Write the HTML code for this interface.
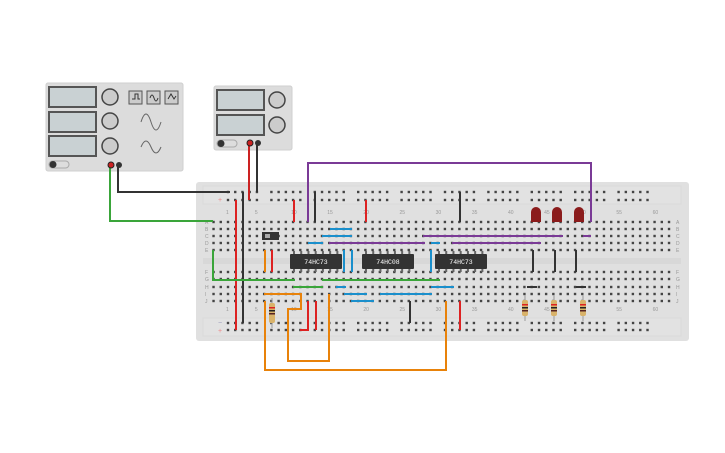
<!DOCTYPE html>
<html><head><meta charset="utf-8"><style>
body{margin:0;background:#fff;width:725px;height:453px;overflow:hidden;font-family:"Liberation Sans",sans-serif}
svg{position:absolute;left:0;top:0}
</style></head><body>
<svg id="s" width="725" height="453" viewBox="0 0 725 453" xmlns="http://www.w3.org/2000/svg">
<rect x="46" y="83" width="137" height="88" rx="2" fill="#dcdcdc" stroke="#cfcfcf"/>
<rect x="49" y="87" width="47" height="20" fill="#c9d1d3" stroke="#555" stroke-width="2"/>
<rect x="49" y="112" width="47" height="20" fill="#c9d1d3" stroke="#555" stroke-width="2"/>
<rect x="49" y="136" width="47" height="20" fill="#c9d1d3" stroke="#555" stroke-width="2"/>
<circle cx="110" cy="97" r="8" fill="#ccc" stroke="#444" stroke-width="1.5"/>
<circle cx="110" cy="121" r="8" fill="#ccc" stroke="#444" stroke-width="1.5"/>
<circle cx="110" cy="146" r="8" fill="#ccc" stroke="#444" stroke-width="1.5"/>
<rect x="129" y="91" width="13" height="13" fill="#ccc" stroke="#555"/>
<rect x="147" y="91" width="13" height="13" fill="#ccc" stroke="#555"/>
<rect x="165" y="91" width="13" height="13" fill="#ccc" stroke="#555"/>
<path d="M132 99h3v-5h3v5h2M150 98q2-6 4 0t4 0M168 99l3-5 3 5 2-3" fill="none" stroke="#333"/>
<path d="M141 122q5-16 10 0t10 0M141 147q5-12 10 0t10 0" fill="none" stroke="#666"/>
<rect x="49" y="161" width="20" height="7" rx="3.5" fill="#ddd" stroke="#aaa"/><circle cx="53" cy="164.5" r="3.5" fill="#333"/>
<rect x="214" y="86" width="78" height="64" rx="2" fill="#dcdcdc" stroke="#cfcfcf"/>
<rect x="217" y="90" width="47" height="20" fill="#c9d1d3" stroke="#555" stroke-width="2"/>
<rect x="217" y="115" width="47" height="20" fill="#c9d1d3" stroke="#555" stroke-width="2"/>
<circle cx="277" cy="100" r="8" fill="#ccc" stroke="#444" stroke-width="1.5"/>
<circle cx="277" cy="125" r="8" fill="#ccc" stroke="#444" stroke-width="1.5"/>
<rect x="217" y="140" width="20" height="7" rx="3.5" fill="#ddd" stroke="#aaa"/><circle cx="221" cy="143.5" r="3.5" fill="#333"/>
<rect x="196" y="182" width="493" height="159" rx="3" fill="#e0e0e0"/>
<rect x="203" y="186" width="478" height="18" fill="#e2e2e2" stroke="#dadada"/>
<rect x="203" y="318" width="478" height="18" fill="#e2e2e2" stroke="#dadada"/>
<rect x="203" y="258" width="478" height="6" fill="#d8d8d8"/>
<g id="holes" fill="#444"></g>
<g font-size="5" fill="#999" id="labels"></g>
<text x="218" y="202" font-size="7" fill="#e88">+</text>
<text x="218" y="325" font-size="7" fill="#99b">−</text>
<text x="218" y="333" font-size="7" fill="#e88">+</text>
<g fill="none" stroke-width="2" stroke-linejoin="miter">
<path d="M118 165V192H230" stroke="#333"/>
<path d="M110 165V221H213" stroke="#3aa53a"/>
<path d="M249 143V200" stroke="#c22"/>
<path d="M257 143V192" stroke="#333"/>
<path d="M308 222V163H591V222" stroke="#7a3a96"/>
<path d="M236 200V330" stroke="#d22"/>
<path d="M243 192V323" stroke="#333"/>
<path d="M294 200V222M366 200V222" stroke="#d22"/>
<path d="M315 192V222M460 192V222" stroke="#333"/>
<path d="M213 250V280H295M322 280H440M293 287H323" stroke="#3aa53a"/>
<path d="M322 236H352M330 229H352M308 243H323M431 243H440M344 250V272M352 250V272M431 250V272M336 287H346M344 294H367M380 294H432M351 301H374M431 287H454" stroke="#1a8fcc"/>
<path d="M329 243H425M423 236H563M452 243H541M583 236H591" stroke="#7a3a96"/>
<path d="M265 250V272M265 301V370H446V301M264 294H301V309H288V361H329V294" stroke="#e8820a"/>
<path d="M272 250V272" stroke="#d22"/>
<path d="M308 301V330H300M316 301V330M460 301V330" stroke="#d22"/>
<path d="M410 301V323M533 250V272M555 250V272M576 250V272M527 287H537M576 287H586" stroke="#333"/>
</g>
<circle cx="111" cy="165" r="3" fill="#c22" stroke="#222"/><circle cx="119" cy="165" r="3" fill="#333"/>
<circle cx="250" cy="143" r="3" fill="#c22" stroke="#222"/><circle cx="258" cy="143" r="3" fill="#333"/>
<rect x="262" y="232" width="17" height="8" fill="#333"/><rect x="265" y="234" width="5" height="4" fill="#aaa"/>
<g id="pins" fill="#666"></g>
<g font-size="6.5" fill="#fff" font-family="Liberation Mono,monospace" text-anchor="middle">
<rect x="290" y="254" width="52" height="15" rx="1" fill="#333"/><text x="316" y="264">74HC73</text>
<rect x="362" y="254" width="52" height="15" rx="1" fill="#333"/><text x="388" y="264">74HC08</text>
<rect x="435" y="254" width="52" height="15" rx="1" fill="#333"/><text x="461" y="264">74HC73</text>
</g>
<g fill="#8b1c1c"><path d="M531 222v-10a5 5 0 0 1 10 0v10z"/><path d="M552 222v-10a5 5 0 0 1 10 0v10z"/><path d="M574 222v-10a5 5 0 0 1 10 0v10z"/></g>
<g id="res"></g>
</svg>
<script>
var h=document.getElementById('holes'),out='';
function X(c){return 228+(c-1)*7.23}
var rowsY=[222,229,236,243,250,272,279,287,294,301];
for(var c=-1;c<=62;c++)for(var r=0;r<10;r++)out+='<rect x="'+(X(c)-1.2)+'" y="'+(rowsY[r]-1.2)+'" width="2.4" height="2.4"/>';
for(var g=0;g<10;g++)for(var k=0;k<5;k++){var x=X(1)+g*43.4+k*7.23;[192,200,323,330].forEach(function(y){out+='<rect x="'+(x-1.2)+'" y="'+(y-1.2)+'" width="2.4" height="2.4"/>';});}
h.innerHTML=out;
var p='';[290,362,435].forEach(function(x0){for(var i=0;i<7;i++){var x=x0+4+i*7.23;p+='<rect x="'+(x-1)+'" y="251" width="2" height="3"/><rect x="'+(x-1)+'" y="269" width="2" height="3"/>';}});
document.getElementById('pins').innerHTML=p;
var l='';for(var c=1;c<=60;c++)if(c==1||c%5==0){l+='<text x="'+(X(c)-2)+'" y="214">'+c+'</text><text x="'+(X(c)-2)+'" y="311">'+c+'</text>';}
'ABCDEFGHIJ'.split('').forEach(function(L,i){l+='<text x="205" y="'+(rowsY[i]+2)+'">'+L+'</text><text x="676" y="'+(rowsY[i]+2)+'">'+L+'</text>';});
document.getElementById('labels').innerHTML=l;
var rs='';[[272,301,325],[525,298,318],[554,298,318],[583,298,318]].forEach(function(a){var x=a[0],y=a[1];rs+='<line x1="'+x+'" y1="'+(y-3)+'" x2="'+x+'" y2="'+(a[2]+3)+'" stroke="#999"/><rect x="'+(x-3)+'" y="'+(y+2)+'" width="6" height="'+(a[2]-y-4)+'" rx="2" fill="#d9b36a"/><rect x="'+(x-3)+'" y="'+(y+6)+'" width="6" height="1.5" fill="#d22"/><rect x="'+(x-3)+'" y="'+(y+9)+'" width="6" height="1.5" fill="#222"/><rect x="'+(x-3)+'" y="'+(y+12)+'" width="6" height="1.5" fill="#522"/>';});
document.getElementById('res').innerHTML=rs;
</script>
</body></html>
